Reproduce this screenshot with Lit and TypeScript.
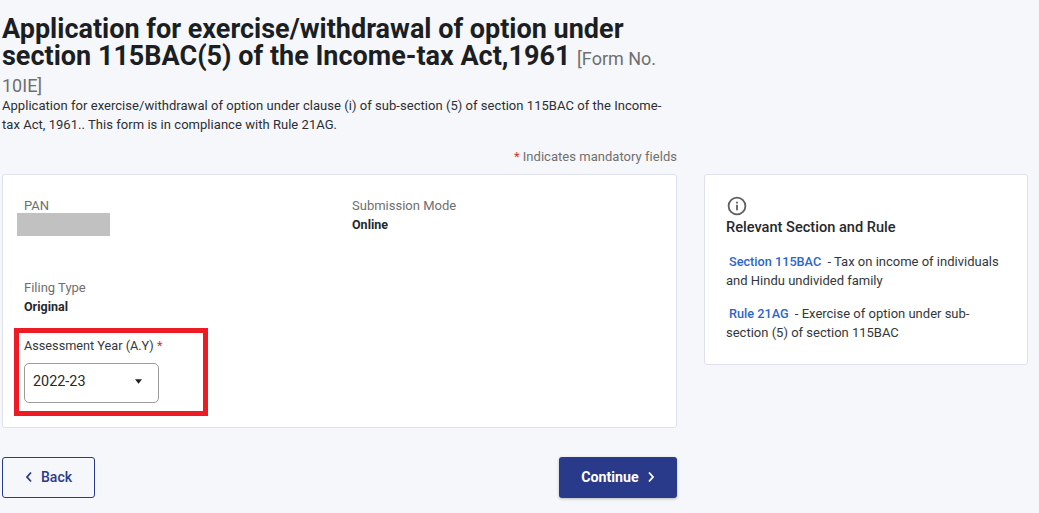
import { LitElement, html, css } from "lit";
import { customElement } from "lit/decorators.js";

@customElement("app-root")
export class AppRoot extends LitElement {
  static styles = css`
    :host { display: block; height: 513px; overflow: hidden; background: #f6f7fb; font-family: Roboto, "Liberation Sans", sans-serif; color: #1f2327; position: relative; }
    .page { display: flex; gap: 27px; padding: 16px 11px 0 2px; align-items: flex-start; }
    .main { width: 675px; flex: none; }
    h1 { margin: 0 0 -1px; font-size: 27px; line-height: 27px; font-weight: 700; color: #1b1f23; width: 670px; }
    h1 span { font-size: 18px; font-weight: 400; color: #6f6f6f; line-height: 1; }
    .desc { margin: 0; font-size: 13px; line-height: 19px; color: #2b2f33; width: 668px; letter-spacing: .04px; }
    .mand { text-align: right; font-size: 13px; line-height: 19px; color: #6f6f6f; margin-top: 13px; letter-spacing: .03px; }
    .mand i, .req { color: #d9342b; font-style: normal; }
    .card { background: #fff; border: 1px solid #dfe1ee; border-radius: 3px; box-sizing: border-box; }
    .form { margin-top: 8px; height: 254px; padding: 23px 22px 0 21px; display: grid; grid-template-columns: 328px 1fr; grid-template-rows: 68px 59px auto; align-content: start; }
    .label { font-size: 13px; line-height: 15px; color: #6f6f6f; }
    .value { font-size: 12.5px; line-height: 18px; font-weight: 700; color: #25292d; margin-top: 3px; }
    .mask { width: 93px; height: 23px; background: #c1c1c1; margin-left: -7px; }
    .f2 { padding-top: 14px; }
    .ay { grid-column: 1 / 3; padding-top: 13px; position: relative; }
    .ay .label { color: #33373b; font-size: 12.7px; }
    .select { margin-top: 10px; width: 135px; height: 40px; box-sizing: border-box; border: 1px solid #9c9c9c; border-radius: 5px; display: flex; align-items: center; justify-content: space-between; padding: 0 16px 3px 8px; font-size: 14.4px; color: #25292d; }
    .select svg { display: block; }
    .redbox { position: absolute; left: -10px; top: 3px; width: 194px; height: 88px; box-sizing: border-box; border: 5px solid #ed1c24; pointer-events: none; }
    .actions { display: flex; justify-content: space-between; margin-top: 29px; }
    .btn { height: 41px; box-sizing: border-box; border-radius: 3px; display: flex; align-items: center; justify-content: center; font-size: 14px; padding-bottom: 1px; }
    .back { width: 93px; border: 1px solid #2a3a8a; color: #2a3a8a; gap: 8px; font-weight: 500; }
    .next { width: 118px; background: #2a3a8a; color: #fff; gap: 8px; font-weight: 700; font-size: 14.2px; box-shadow: 0 1px 3px rgba(0,0,0,.25); }
    .side { width: 324px; flex: none; height: 191px; margin-top: 158px; padding: 21px 21px 0 21px; }
    .side svg { display: block; margin-left: 1px; }
    .side h2 { margin: 1px 0 0; font-size: 14.6px; line-height: 20px; font-weight: 500; color: #25292d; }
    .side p { margin: 15px 0 0; font-size: 13px; line-height: 19px; color: #33373b; }
    .side p + p { margin-top: 14px; }
    .side a { color: #2b66cf; font-weight: 500; font-size: 12.7px; margin: 0 3px; text-decoration: none; }
  `;

  render() {
    return html`
      <div class="page">
        <div class="main">
          <h1>Application for exercise/withdrawal of option under section 115BAC(5) of the Income-tax Act,1961 <span>[Form No. 10IE]</span></h1>
          <p class="desc">Application for exercise/withdrawal of option under clause (i) of sub-section (5) of section 115BAC of the Income-tax Act, 1961.. This form is in compliance with Rule 21AG.</p>
          <div class="mand"><i>*</i> Indicates mandatory fields</div>
          <div class="card form">
            <div><div class="label">PAN</div><div class="mask"></div></div>
            <div><div class="label">Submission Mode</div><div class="value">Online</div></div>
            <div class="f2" style="grid-column:1/3"><div class="label">Filing Type</div><div class="value">Original</div></div>
            <div class="ay">
              <div class="label">Assessment Year (A.Y) <span class="req">*</span></div>
              <div class="select"><span>2022-23</span>
                <svg width="7" height="5" viewBox="0 0 7 5"><path d="M0 .2h7L3.500 4.800z" fill="#1f2327"/></svg>
              </div>
              <div class="redbox"></div>
            </div>
          </div>
          <div class="actions">
            <div class="btn back">
              <svg width="8" height="12" viewBox="0 0 8 12"><path d="M6 1.500 2 6l4 4.500" fill="none" stroke="currentColor" stroke-width="1.800"/></svg>
              Back
            </div>
            <div class="btn next">Continue
              <svg width="8" height="12" viewBox="0 0 8 12"><path d="M2 1.500 6 6l-4 4.500" fill="none" stroke="currentColor" stroke-width="1.800"/></svg>
            </div>
          </div>
        </div>
        <div class="card side">
          <svg width="20" height="20" viewBox="0 0 20 20">
            <circle cx="10" cy="10" r="8.400" fill="none" stroke="#5f5f5f" stroke-width="1.800"/>
            <rect x="9.100" y="8.800" width="1.800" height="5.500" fill="#5f5f5f"/>
            <rect x="9.100" y="5.700" width="1.800" height="1.800" fill="#5f5f5f"/>
          </svg>
          <h2>Relevant Section and Rule</h2>
          <p><a>Section 115BAC</a> - Tax on income of individuals and Hindu undivided family</p>
          <p><a>Rule 21AG</a> - Exercise of option under sub-section (5) of section 115BAC</p>
        </div>
      </div>
    `;
  }
}
